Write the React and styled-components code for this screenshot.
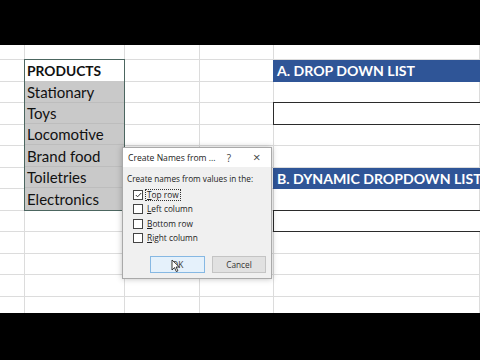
import React from "react";
import styled, { createGlobalStyle } from "styled-components";

const GlobalStyle = createGlobalStyle`
  html, body {
    margin: 0;
    padding: 0;
    background: #000;
  }
  body {
    width: 480px;
    height: 360px;
    overflow: hidden;
  }
`;

const Frame = styled.div`
  width: 480px;
  height: 360px;
  display: flex;
  flex-direction: column;
  background: #000;
`;

const Letterbox = styled.div`
  height: ${(p) => p.$h}px;
  flex: none;
  background: #000;
`;

const Sheet = styled.div`
  position: relative;
  height: 268px;
  flex: none;
  overflow: hidden;
  background: #fff;
  display: grid;
  grid-template-columns: 25px 100px 75px 74px 206px;
  grid-template-rows: 15px repeat(12, 21.5px);
  font-family: Lato, "Open Sans", sans-serif;
`;

const GridCell = styled.div`
  grid-row: ${(p) => p.$row};
  grid-column: ${(p) => p.$col};
  border-right: 1px solid #dcdcdc;
  border-bottom: 1px solid #dcdcdc;
`;

const ProductTable = styled.div`
  grid-column: 2;
  grid-row: 2 / span 7;
  margin: -1px 0 0 -1px;
  border: 1px solid #4c6660;
  display: grid;
  grid-template-rows: repeat(7, 1fr);
  z-index: 1;
`;

const ProductCell = styled.div`
  display: flex;
  align-items: center;
  padding-left: 2px;
  font-size: ${(p) => (p.$header ? 13.8 : 15)}px;
  color: #111;
  font-weight: ${(p) => (p.$header ? 700 : 400)};
  background: ${(p) => (p.$header ? "#fff" : "#c9c9c9")};
  border-bottom: 1px solid ${(p) => (p.$header ? "transparent" : "#bdbdbd")};
  &:last-child {
    border-bottom: none;
  }
`;

const HeaderBar = styled.div`
  grid-column: 5;
  grid-row: ${(p) => p.$row};
  margin-left: -1px;
  background: #2f5597;
  color: #fff;
  font-weight: 700;
  font-size: 14.1px;
  display: flex;
  align-items: center;
  padding-left: 4px;
  white-space: nowrap;
  overflow: hidden;
  z-index: 1;
`;

const InputBox = styled.div`
  grid-column: 5;
  grid-row: ${(p) => p.$row};
  margin: -1px -2px 0 -1px;
  border: 1px solid #2b2b2b;
  background: #fff;
  z-index: 1;
`;

const Dialog = styled.div`
  position: absolute;
  left: 122px;
  top: 102px;
  width: 150px;
  height: 132px;
  box-sizing: border-box;
  border: 1px solid #a9a9a9;
  background: #f0f0f0;
  box-shadow: 0 0 6px rgba(0, 0, 0, 0.25);
  display: flex;
  flex-direction: column;
  font-family: "Open Sans", "Noto Sans", sans-serif;
  color: #222;
  z-index: 5;
`;

const TitleBar = styled.div`
  height: 19px;
  background: #fff;
  display: flex;
  align-items: center;
  padding: 0 0 0 5px;
  font-size: 8.6px;
`;

const Title = styled.span`
  flex: 1;
  white-space: nowrap;
`;

const TitleButton = styled.span`
  width: ${(p) => p.$w}px;
  text-align: center;
  color: #444;
  font-size: ${(p) => p.$size}px;
  line-height: 1;
`;

const Body = styled.div`
  flex: 1;
  display: flex;
  flex-direction: column;
  padding: 6px 5px 5px 4px;
`;

const Prompt = styled.div`
  font-size: 8.2px;
  white-space: nowrap;
  margin-bottom: 6px;
`;

const Options = styled.div`
  display: flex;
  flex-direction: column;
  gap: 5.5px;
  padding-left: 6px;
`;

const Option = styled.label`
  display: flex;
  align-items: center;
  gap: 3px;
  font-size: 8.3px;
  height: 9px;
`;

const Box = styled.span`
  width: 8px;
  height: 8px;
  border: 1px solid #444;
  background: #fff;
  display: flex;
  align-items: center;
  justify-content: center;
`;

const LabelText = styled.span`
  padding: 0 1px;
  outline: ${(p) => (p.$focused ? "1px dotted #333" : "none")};
  line-height: 10px;
`;

const Buttons = styled.div`
  margin-top: auto;
  display: flex;
  justify-content: flex-end;
  gap: 7px;
`;

const Button = styled.div`
  position: relative;
  width: ${(p) => p.$w}px;
  height: 17px;
  box-sizing: border-box;
  display: flex;
  align-items: center;
  justify-content: center;
  font-size: 8.3px;
  background: ${(p) => (p.$primary ? "#e5f1fb" : "#e1e1e1")};
  border: 1px solid ${(p) => (p.$primary ? "#86b8e3" : "#c4c4c4")};
  color: #333;
`;

const Cursor = styled.svg`
  position: absolute;
  left: 20px;
  top: 2px;
`;

const products = ["Stationary", "Toys", "Locomotive", "Brand food", "Toiletries", "Electronics"];

const options = [
  { key: "T", rest: "op row", checked: true },
  { key: "L", rest: "eft column" },
  { key: "B", rest: "ottom row" },
  { key: "R", rest: "ight column" },
];

export default function App() {
  const cells = [];
  for (let r = 1; r <= 13; r++) {
    for (let c = 1; c <= 5; c++) {
      cells.push(<GridCell key={`${r}-${c}`} $row={r} $col={c} />);
    }
  }

  return (
    <>
      <GlobalStyle />
      <Frame>
        <Letterbox $h={45} />
        <Sheet>
          {cells}
          <ProductTable>
            <ProductCell $header>PRODUCTS</ProductCell>
            {products.map((p) => (
              <ProductCell key={p}>{p}</ProductCell>
            ))}
          </ProductTable>
          <HeaderBar $row={2}>A. DROP DOWN LIST</HeaderBar>
          <InputBox $row={4} />
          <HeaderBar $row={7}>B. DYNAMIC DROPDOWN LIST</HeaderBar>
          <InputBox $row={9} />

          <Dialog>
            <TitleBar>
              <Title>Create Names from ...</Title>
              <TitleButton $w={30} $size={10}>?</TitleButton>
              <TitleButton $w={32} $size={13}>×</TitleButton>
            </TitleBar>
            <Body>
              <Prompt>Create names from values in the:</Prompt>
              <Options>
                {options.map((o) => (
                  <Option key={o.key}>
                    <Box>
                      {o.checked && (
                        <svg width="7" height="6" viewBox="0 0 7 6">
                          <path d="M0.8 3 L2.6 4.8 L6.2 1" fill="none" stroke="#333" strokeWidth="1" />
                        </svg>
                      )}
                    </Box>
                    <LabelText $focused={o.checked}>
                      <u>{o.key}</u>
                      {o.rest}
                    </LabelText>
                  </Option>
                ))}
              </Options>
              <Buttons>
                <Button $primary $w={55}>
                  OK
                  <Cursor width="10" height="14" viewBox="0 0 10 14">
                    <path d="M1 1 L1 11 L3.5 8.6 L5.3 12.6 L6.9 11.9 L5.1 8 L8.4 8 Z" fill="#fff" stroke="#222" strokeWidth="0.9" strokeLinejoin="round" />
                  </Cursor>
                </Button>
                <Button $w={54}>Cancel</Button>
              </Buttons>
            </Body>
          </Dialog>
        </Sheet>
        <Letterbox $h={47} />
      </Frame>
    </>
  );
}
